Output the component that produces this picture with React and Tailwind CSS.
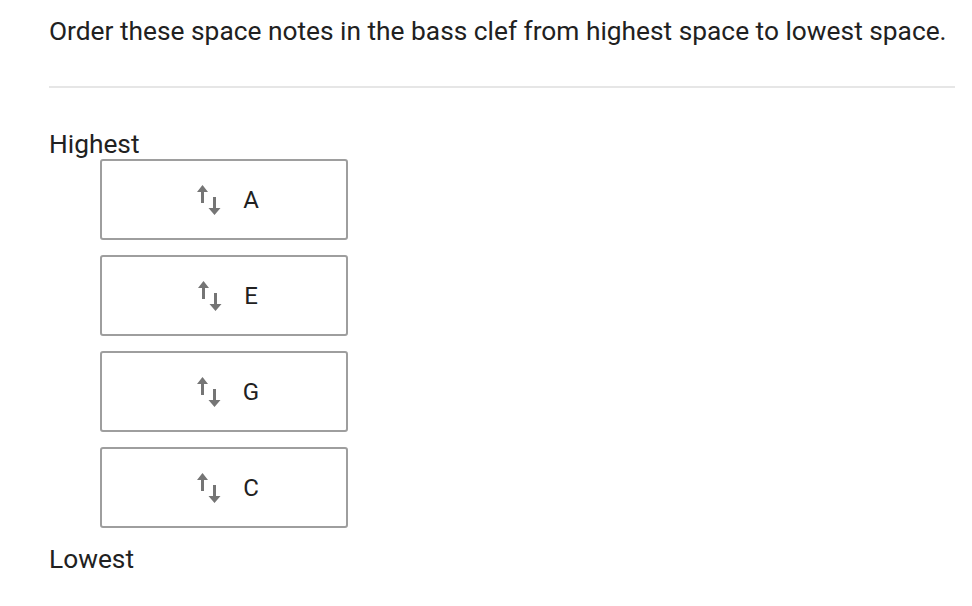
import React from 'react';

const notes = ['A', 'E', 'G', 'C'];

// little up/down "drag to reorder" glyph
const SwapIcon = () => (
    <svg width="24" height="32" viewBox="0 0 24 32" className="shrink-0">
        <path d="M5.5 1 L11 8 L7 8 L7 19 L4 19 L4 8 L0 8 Z" fill="#757575" />
        <path d="M17.5 31 L11.5 24 L16 24 L16 13 L19 13 L19 24 L23.5 24 Z" fill="#757575" />
    </svg>
);

const App = () => {
    return (
        <div className="w-[972px] h-[606px] bg-white px-[49px] pt-[13px] text-[#212121]" style={{ fontFamily: 'Roboto, "Liberation Sans", sans-serif' }}>
            <h1 className="text-[26.3px] leading-[36px] font-normal whitespace-nowrap">
                Order these space notes in the bass clef from highest space to lowest space.
            </h1>

            <div className="mt-[37px] h-[2px] w-[906px] bg-[#e6e6e6]" />

            {/* ordering list */}
            <div className="mt-[42px] text-[26.3px] leading-[28px]">Highest</div>
            <div className="mt-[1px] ml-[51px] flex flex-col gap-[15px]">
                {notes.map(n => (
                    <div key={n} className="w-[248px] h-[81px] border-2 border-[#9e9e9e] rounded-[3px] flex items-center justify-center gap-[22px] pl-[8px]">
                        <SwapIcon />
                        <span className="text-[24px] leading-none">{n}</span>
                    </div>
                ))}
            </div>
            <div className="mt-[17px] text-[26.3px] leading-[28px]">Lowest</div>
        </div>
    );
};

export default App;
